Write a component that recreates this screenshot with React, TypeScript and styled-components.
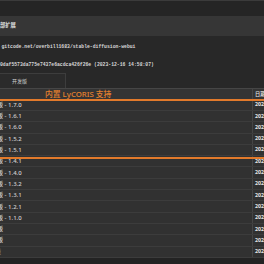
import React from "react"
import styled, { createGlobalStyle } from "styled-components"

const GlobalStyle = createGlobalStyle`
  html, body {
    margin: 0;
    padding: 0;
    background: #262626;
  }
  body {
    font-family: "Noto Sans", "Noto Sans CJK SC", sans-serif;
    overflow: hidden;
  }
`

const Page = styled.div`
  width: 264px;
  height: 264px;
  display: flex;
  flex-direction: column;
  overflow: hidden;
  background: #282828;
  color: #d6d6d6;
`

const TopBar = styled.div`
  height: 16px;
  flex-shrink: 0;
  box-sizing: border-box;
  border-top: 1px solid #3b3b3b;
  background: #252525;
`

const SectionTitle = styled.div`
  height: 20px;
  flex-shrink: 0;
  display: flex;
  align-items: center;
  background: #363636;
  font-size: 5.3px;
  line-height: 1;
  font-weight: 700;
  color: #e2e2e2;
  white-space: nowrap;
`

const Info = styled.div`
  height: 37px;
  flex-shrink: 0;
  box-sizing: border-box;
  padding-top: 8px;
  display: flex;
  flex-direction: column;
  gap: 12px;
  font-family: "Liberation Mono", "DejaVu Sans Mono", monospace;
  font-size: 4.75px;
  line-height: 6px;
  font-weight: 700;
  white-space: nowrap;
  color: #d8d8d8;
`

const InfoLine = styled.div<{ $indent?: number }>`
  padding-left: ${(p) => p.$indent ?? 0}px;
`

const TabBar = styled.div`
  height: 15px;
  flex-shrink: 0;
  display: flex;
`

const Tab = styled.div`
  width: 66px;
  box-sizing: border-box;
  border-top: 1px solid #3d3d3d;
  border-right: 1px solid #3d3d3d;
  background: #2b2b2b;
  padding-left: 12px;
  display: flex;
  align-items: center;
  font-size: 5px;
  line-height: 1;
  color: #cfcfcf;
`

const Table = styled.div`
  flex: 1;
  display: flex;
  flex-direction: column;
  background: #313131;
  overflow: hidden;
`

const HeaderRow = styled.div`
  position: relative;
  height: 11.7px;
  flex-shrink: 0;
  box-sizing: border-box;
  border-top: 1px solid #464646;
  background: #343434;
  display: grid;
  grid-template-columns: 252px 1fr;

  &::after {
    content: "";
    position: absolute;
    left: 0;
    right: 0;
    bottom: -1.6px;
    height: 1.8px;
    background: #e27a2b;
    z-index: 2;
  }
`

const HeaderMain = styled.div`
  display: flex;
  align-items: center;
  padding-left: 45px;
  padding-top: 2px;
`

const Annotation = styled.span`
  font-size: 7.8px;
  line-height: 1;
  font-weight: 500;
  color: #e5802e;
  white-space: nowrap;
`

const Row = styled.div<{ $mark?: boolean }>`
  position: relative;
  height: 11.3px;
  flex-shrink: 0;
  box-sizing: border-box;
  border-bottom: 1px solid #3c3c3c;
  display: grid;
  grid-template-columns: 252px 1fr;

  &::before {
    content: "";
    display: ${(p) => (p.$mark ? "block" : "none")};
    position: absolute;
    left: 0;
    right: 0;
    top: 1px;
    height: 1.5px;
    background: #e27a2b;
    z-index: 2;
  }
`

const NameCell = styled.div`
  display: flex;
  align-items: center;
  overflow: hidden;
  white-space: nowrap;
  font-size: 6px;
  line-height: 1;
  font-weight: 500;
  color: #d2d2d2;
`

const Glyph = styled.span<{ $shift: number; $dim?: boolean }>`
  margin-left: -${(p) => p.$shift}px;
  color: ${(p) => (p.$dim ? "#8a8a8a" : "#d2d2d2")};
`

const DateCell = styled.div<{ $head?: boolean }>`
  border-left: 1px solid #454545;
  padding-left: 2px;
  display: flex;
  align-items: center;
  overflow: hidden;
  white-space: nowrap;
  font-size: 5.2px;
  line-height: 1;
  font-weight: ${(p) => (p.$head ? 500 : 700)};
  color: #e6e6e6;
`

const Footer = styled.div`
  height: 6px;
  flex-shrink: 0;
  background: #232323;
`

type Release = {
  version?: string
  date: string
  shift?: number
  dim?: boolean
}

const releases: Release[] = [
  { version: "1.7.0", date: "2023-12-16" },
  { version: "1.6.1", date: "2023-11-27" },
  { version: "1.6.0", date: "2023-09-01" },
  { version: "1.5.2", date: "2023-08-23" },
  { version: "1.5.1", date: "2023-07-27" },
  { version: "1.4.1", date: "2023-07-12" },
  { version: "1.4.0", date: "2023-06-27" },
  { version: "1.3.2", date: "2023-06-05" },
  { version: "1.3.1", date: "2023-05-31" },
  { version: "1.2.1", date: "2023-05-15" },
  { version: "1.1.0", date: "2023-05-02" },
  { date: "2023-03-29" },
  { date: "2023-03-12" },
  { date: "2023-02-25", shift: 5, dim: true },
]

export default function App() {
  return (
    <>
      <GlobalStyle />
      <Page>
        <TopBar />
        <SectionTitle>部扩展</SectionTitle>
        <Info>
          <InfoLine $indent={1.5}>gitcode.net/overbill1683/stable-diffusion-webui</InfoLine>
          <InfoLine>0daf5573da775e7437e6acdca426f26e (2023-12-16 14:58:07)</InfoLine>
        </Info>
        <TabBar>
          <Tab>开发版</Tab>
        </TabBar>
        <Table>
          <HeaderRow>
            <HeaderMain>
              <Annotation>内置 LyCORIS 支持</Annotation>
            </HeaderMain>
            <DateCell $head>日期</DateCell>
          </HeaderRow>
          {releases.map((r, i) => (
            <Row key={i} $mark={r.version === "1.4.1"}>
              <NameCell>
                <Glyph $shift={r.shift ?? 3} $dim={r.dim}>
                  版
                </Glyph>
                {r.version && <>&nbsp;- {r.version}</>}
              </NameCell>
              <DateCell>{r.date}</DateCell>
            </Row>
          ))}
        </Table>
        <Footer />
      </Page>
    </>
  )
}
